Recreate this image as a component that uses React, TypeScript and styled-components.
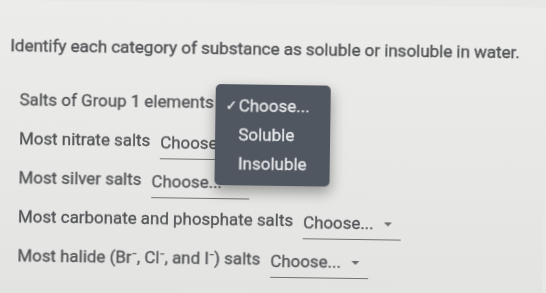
import React, { FC } from 'react';
import styled, { createGlobalStyle } from 'styled-components';

const GlobalStyle = createGlobalStyle`
  html, body {
    margin: 0;
    padding: 0;
    background: #e8e8e6;
    overflow: hidden;
  }
`;

const Page = styled.div`
  width: 546px;
  height: 293px;
  box-sizing: border-box;
  padding: 34px 0 0 11px;
  font-family: Roboto, 'Noto Sans', sans-serif;
  color: #535557;
  background: linear-gradient(180deg, #ececea 0%, #e7e7e5 60%, #e3e3e1 100%);
  transform: rotate(0.8deg);
  transform-origin: 0 0;
  filter: blur(0.35px);
`;

const Title = styled.h1`
  margin: 0 0 30px;
  font-size: 17.2px;
  font-weight: 400;
  letter-spacing: -0.1px;
  line-height: 22px;
  color: #515355;
  -webkit-text-stroke: 0.35px #515355;
`;

const List = styled.div`
  display: flex;
  flex-direction: column;
  gap: 7px;
  padding-left: 10px;
`;

const Row = styled.div`
  display: flex;
  align-items: flex-start;
  gap: 10px;
`;

const Label = styled.span`
  font-size: 16.9px;
  line-height: 22px;
  padding-top: 2px;
  -webkit-text-stroke: 0.3px #535557;
`;

const Sup = styled.sup`
  font-size: 9px;
  line-height: 0;
  vertical-align: 6px;
`;

const SelectWrap = styled.div`
  position: relative;
`;

const Select = styled.div`
  display: flex;
  align-items: flex-start;
  gap: 10px;
  width: 98px;
  box-sizing: border-box;
  height: 32px;
  padding-top: 4px;
  border-bottom: 1px solid #707274;
  font-size: 16.9px;
  line-height: 22px;
  -webkit-text-stroke: 0.3px #535557;
`;

const Arrow = styled.span`
  width: 0;
  height: 0;
  border-left: 4px solid transparent;
  border-right: 4px solid transparent;
  border-top: 4px solid #6a6c6e;
  margin-top: 10px;
`;

const Menu = styled.div`
  position: absolute;
  left: -8px;
  top: -5px;
  width: 115px;
  padding: 6px 0 8px;
  background: #515760;
  border-radius: 5px;
  box-shadow: 0 6px 14px rgba(0, 0, 0, 0.35);
  z-index: 2;
`;

const Item = styled.div<{ $checked?: boolean }>`
  display: flex;
  align-items: center;
  height: 29px;
  padding-left: ${(p) => (p.$checked ? '10px' : '23px')};
  font-size: 17px;
  color: #e6e8ea;
  -webkit-text-stroke: 0.3px #e6e8ea;
`;

const Check = styled.span`
  font-size: 14px;
  width: 13px;
`;

const options = ['Choose...', 'Soluble', 'Insoluble'];

const Dropdown: FC<{ open?: boolean }> = ({ open }) => (
  <SelectWrap>
    <Select>
      Choose...
      <Arrow />
    </Select>
    {open && (
      <Menu>
        {options.map((o, i) => (
          <Item key={o} $checked={i === 0}>
            {i === 0 && <Check>✓</Check>}
            {o}
          </Item>
        ))}
      </Menu>
    )}
  </SelectWrap>
);

export default function App() {
  return (
    <>
      <GlobalStyle />
      <Page>
        <Title>Identify each category of substance as soluble or insoluble in water.</Title>
        <List>
          <Row>
            <Label>Salts of Group 1 elements</Label>
            <Dropdown open />
          </Row>
          <Row>
            <Label>Most nitrate salts</Label>
            <Dropdown />
          </Row>
          <Row>
            <Label>Most silver salts</Label>
            <Dropdown />
          </Row>
          <Row>
            <Label>Most carbonate and phosphate salts</Label>
            <Dropdown />
          </Row>
          <Row>
            <Label>
              Most halide (Br<Sup>−</Sup>, Cl<Sup>−</Sup>, and I<Sup>−</Sup>) salts
            </Label>
            <Dropdown />
          </Row>
        </List>
      </Page>
    </>
  );
}
